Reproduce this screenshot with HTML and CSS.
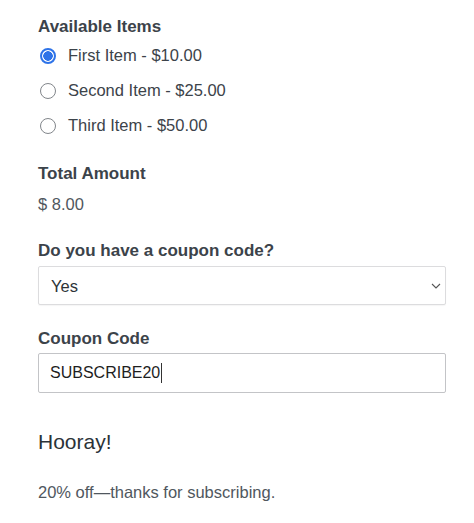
FILE: index.html
```html
<!DOCTYPE html>
<html lang="en">
<head>
  <meta charset="UTF-8" />
  <meta name="viewport" content="width=device-width, initial-scale=1.0"/>
  <title>Coupon Form</title>
  <link rel="stylesheet" href="styles.css">
</head>
<body>

  <form class="order-form">

    <div class="field items">
      <span class="field-label">Available Items</span>
      <label class="choice"><input type="radio" name="item" checked> First Item - $10.00</label>
      <label class="choice"><input type="radio" name="item"> Second Item - $25.00</label>
      <label class="choice"><input type="radio" name="item"> Third Item - $50.00</label>
    </div>

    <div class="field total">
      <span class="field-label">Total Amount</span>
      <p class="amount">$ 8.00</p>
    </div>

    <div class="field has-coupon">
      <label class="field-label" for="hasCoupon">Do you have a coupon code?</label>
      <div class="select-wrap">
        <select id="hasCoupon">
          <option>Yes</option>
          <option>No</option>
        </select>
        <svg class="chevron" width="10" height="6" viewBox="0 0 10 6"><path d="M1 1l4 4 4-4" fill="none" stroke="#555" stroke-width="1.1"/></svg>
      </div>
    </div>

    <div class="field coupon">
      <label class="field-label" for="coupon">Coupon Code</label>
      <div class="text-box"><span>SUBSCRIBE20</span><i class="caret"></i></div>
    </div>

    <div class="notice">
      <h3>Hooray!</h3>
      <p>20% off—thanks for subscribing.</p>
    </div>

  </form>

</body>
</html>
```

FILE: styles.css
```css
* {
  margin: 0;
  padding: 0;
  box-sizing: border-box;
}

body {
  font-family: 'Liberation Sans', Arial, sans-serif;
  background: #fff;
  color: #3c434a;
  padding: 17px 28px 0 38px;
}

.order-form {
  display: flex;
  flex-direction: column;
}

.field {
  display: flex;
  flex-direction: column;
}

.field-label {
  display: block;
  font-size: 17px;
  font-weight: bold;
  color: #3c434a;
  line-height: 20px;
  margin-bottom: 5px;
}

.items .field-label {
  margin-bottom: 1px;
}

.choice {
  display: flex;
  align-items: center;
  gap: 12px;
  font-size: 16.5px;
  color: #3c434a;
  height: 35px;
  padding-left: 2px;
}

.choice input {
  appearance: none;
  width: 16px;
  height: 16px;
  border: 1px solid #82868b;
  border-radius: 50%;
  background: #fff;
  margin: 0;
}

.choice input:checked {
  border: 2px solid #2e73e8;
  background: radial-gradient(circle, #2e73e8 0 4.5px, #fff 5px);
}

.total {
  margin-top: 21px;
}

.total .field-label {
  margin-bottom: 10px;
}

.amount {
  font-size: 16.5px;
  color: #50575e;
  line-height: 20px;
}

.has-coupon {
  margin-top: 27px;
}

.select-wrap {
  position: relative;
  width: 408px;
}

select {
  appearance: none;
  width: 100%;
  height: 39px;
  border: 1px solid #dcdcde;
  border-radius: 2px;
  background: #fff;
  font-family: inherit;
  font-size: 16.5px;
  color: #2c3338;
  padding: 0 12px;
  box-shadow: 0 1px 1px rgba(0,0,0,0.04);
}

.chevron {
  position: absolute;
  right: 5px;
  top: 17px;
}

.coupon {
  margin-top: 24px;
}

.coupon .field-label {
  margin-bottom: 4px;
}

.text-box {
  display: flex;
  align-items: center;
  width: 408px;
  height: 40px;
  border: 1px solid #c3c4c7;
  border-radius: 2px;
  padding: 0 11px;
  font-size: 16px;
  color: #1e1e1e;
}

.caret {
  width: 1px;
  height: 20px;
  background: #333;
  margin-left: 1px;
}

.notice {
  margin-top: 36px;
}

.notice h3 {
  font-size: 21px;
  font-weight: normal;
  color: #2c3338;
  line-height: 26px;
}

.notice p {
  margin-top: 27px;
  font-size: 16.5px;
  color: #50575e;
  line-height: 20px;
}
```
